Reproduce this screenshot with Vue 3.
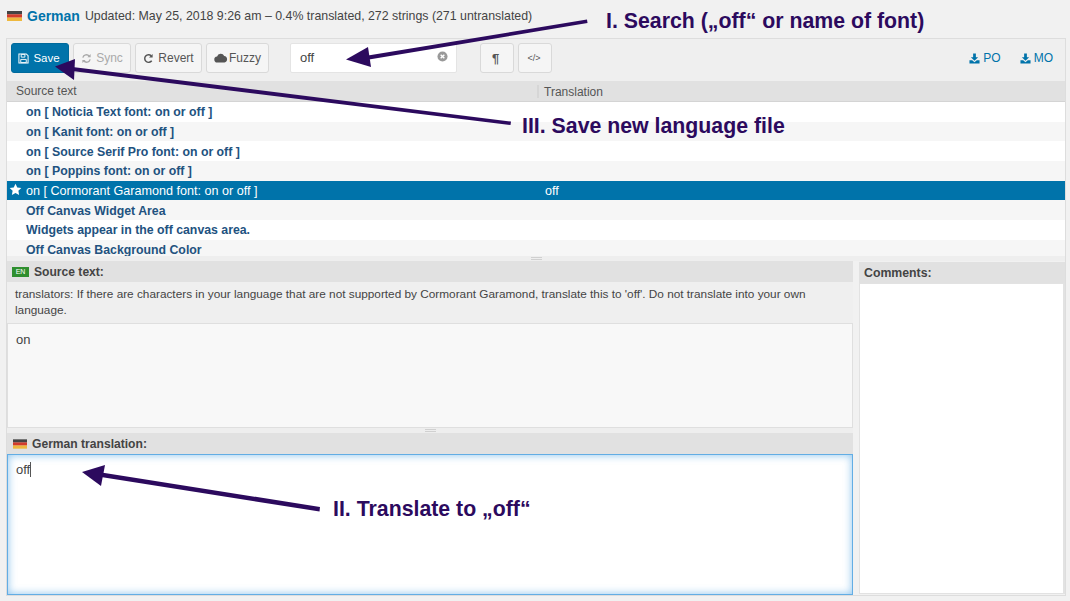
<script setup>
const rows = [
  { text: 'on [ Noticia Text font: on or off ]' },
  { text: 'on [ Kanit font: on or off ]' },
  { text: 'on [ Source Serif Pro font: on or off ]' },
  { text: 'on [ Poppins font: on or off ]' },
  { text: 'on [ Cormorant Garamond font: on or off ]', trans: 'off', selected: true },
  { text: 'Off Canvas Widget Area' },
  { text: 'Widgets appear in the off canvas area.' },
  { text: 'Off Canvas Background Color' }
]
</script>

<template>
  <div class="page">
    <header class="head">
      <svg class="flag" viewBox="0 0 15 10"><rect width="15" height="3.4" fill="#444"/><rect y="3.3" width="15" height="3.4" fill="#d23c2c"/><rect y="6.6" width="15" height="3.4" fill="#eeb83e"/></svg>
      <span class="lang">German</span>
      <span class="meta">Updated: May 25, 2018 9:26 am – 0.4% translated, 272 strings (271 untranslated)</span>
    </header>

    <div class="frame">
      <div class="toolbar">
        <button class="btn save">
          <svg class="ic" viewBox="0 0 12 12"><path d="M1 1h8l2 2v8H1z" fill="none" stroke="currentColor" stroke-width="1.100"/><path d="M3.500 1.500h4v3h-4zM3 7h6v3.500H3z" fill="none" stroke="currentColor" stroke-width="1"/></svg>
          Save
        </button>
        <button class="btn off">
          <svg class="ic" viewBox="0 0 12 12"><path d="M2 5a4 4 0 0 1 7-1.500M10 7a4 4 0 0 1-7 1.500" fill="none" stroke="currentColor" stroke-width="1.500"/><path d="M10.500 1v3.500H7zM1.500 11V7.500H5z" fill="currentColor"/></svg>
          Sync
        </button>
        <button class="btn revert">
          <svg class="ic" viewBox="0 0 12 12"><path d="M9.500 8.500A4.200 4.200 0 1 1 9 3" fill="none" stroke="currentColor" stroke-width="1.600"/><path d="M10.500 1v4H6.500z" fill="currentColor"/></svg>
          Revert
        </button>
        <button class="btn tight">
          <svg class="ic cloud" viewBox="0 0 14 10"><path d="M3.500 9.500a3 3 0 0 1-.4-6A3.800 3.800 0 0 1 10.200 3a3.300 3.300 0 0 1 .3 6.500z" fill="currentColor"/></svg>
          Fuzzy
        </button>
        <div class="search">
          <span>off</span>
          <svg class="clear" viewBox="0 0 12 12"><circle cx="6" cy="6" r="5.500" fill="#999"/><path d="M4 4l4 4M8 4l-4 4" stroke="#fff" stroke-width="1.500"/></svg>
        </div>
        <button class="btn square para">¶</button>
        <button class="btn square code">&lt;/&gt;</button>
        <div class="links">
          <a class="dl">
            <svg class="ic" viewBox="0 0 12 12"><path d="M4.500 .5h3v4h2.500L6 8.500 2 4.500h2.500z" fill="currentColor"/><path d="M.5 8h3l2.500 2 2.500-2h3v3.500H.5z" fill="currentColor"/></svg>
            PO
          </a>
          <a class="dl">
            <svg class="ic" viewBox="0 0 12 12"><path d="M4.500 .5h3v4h2.500L6 8.500 2 4.500h2.500z" fill="currentColor"/><path d="M.5 8h3l2.500 2 2.500-2h3v3.500H.5z" fill="currentColor"/></svg>
            MO
          </a>
        </div>
      </div>

      <div class="thead">
        <div class="c1">Source text</div>
        <div class="c2">Translation</div>
      </div>
      <div class="list">
        <div v-for="(r, i) in rows" :key="i" class="row" :class="{ alt: i % 2 === 1, sel: r.selected }">
          <div class="c1">
            <svg v-if="r.selected" class="star" viewBox="0 0 14 14"><path d="M7 .8l1.900 4 4.400.6-3.200 3 .8 4.400L7 10.700l-3.900 2.100.8-4.400-3.200-3 4.400-.6z" fill="#fff"/></svg>
            {{ r.text }}
          </div>
          <div class="c2">{{ r.trans }}</div>
        </div>
      </div>
      <div class="split"><i class="grip"></i></div>

      <div class="bottom">
        <div class="left">
          <div class="phead">
            <span class="en">EN</span>
            Source text:
          </div>
          <p class="desc">translators: If there are characters in your language that are not supported by Cormorant Garamond, translate this to 'off'. Do not translate into your own language.</p>
          <div class="source">on</div>
          <div class="split"><i class="grip"></i></div>
          <div class="phead">
            <svg class="flag small" viewBox="0 0 15 10"><rect width="15" height="3.400" fill="#444"/><rect y="3.300" width="15" height="3.400" fill="#d23c2c"/><rect y="6.600" width="15" height="3.400" fill="#eeb83e"/></svg>
            German translation:
          </div>
          <div class="target"><span class="typed">off</span></div>
        </div>
        <div class="right">
          <div class="phead">Comments:</div>
          <div class="comments"></div>
        </div>
      </div>
    </div>

    <svg class="arrows" viewBox="0 0 1070 601">
      <g fill="#2c0a5e" stroke="none">
        <path d="M587 19.500l.5 3.500L366 60l-1-4z"/>
        <path d="M346 59.500L368 47l3 20z"/>
        <path d="M511 121.500l-.5 3.500L72 71l.5-4z"/>
        <path d="M55 66.500L75 59l-1 21z"/>
        <path d="M320 507l-.5 4.500L101 477l.5-4.500z"/>
        <path d="M82 472l23-7-4 21z"/>
      </g>
    </svg>
    <div class="note n1">I. Search („off“ or name of font)</div>
    <div class="note n2">II. Translate to „off“</div>
    <div class="note n3">III. Save new language file</div>
  </div>
</template>

<style scoped>
.page {
  position: relative;
  width: 1070px;
  height: 601px;
  overflow: hidden;
  background: #f1f1f1;
  color: #444;
  font: 12px/16px "Liberation Sans", Arial, sans-serif;
}
.head {
  height: 32px;
  padding-left: 7px;
  display: flex;
  align-items: center;
  box-sizing: border-box;
}
.flag { width: 15px; height: 10px; flex: none; margin-right: 5px; }
.flag.small { margin-right: 5px; margin-left: 6px; width: 14px; }
.lang { color: #0073aa; font-size: 14px; font-weight: 700; margin-right: 5px; }
.meta { font-size: 12.360px; color: #444; }
.frame {
  margin: 6px 4px 0 6px;
  height: 558px;
  border: 1px solid #ddd;
  box-sizing: border-box;
  display: flex;
  flex-direction: column;
}
.toolbar {
  height: 42px;
  padding: 4px 4px 0 4px;
  box-sizing: border-box;
  display: flex;
  align-items: flex-start;
  gap: 4px;
  background: #efefef;
  flex: none;
}
.btn {
  height: 30px;
  width: 58px;
  padding: 0;
  border: 1px solid #d9d9d9;
  border-radius: 3px;
  background: #f5f5f5;
  color: #555;
  font: 12px "Liberation Sans", Arial, sans-serif;
  display: flex;
  align-items: center;
  justify-content: center;
  gap: 4px;
}
.btn.save { background: #0073aa; border-color: #006a9c; color: #fff; font-size: 11.500px; padding-right: 2px; }
.btn.off { color: #aaa; }
.btn.revert { width: 67px; }
.btn.tight { width: 63px; gap: 1px; }
.btn.square { width: 34px; }
.para { font-size: 13px; font-weight: 700; padding-right: 3px; }
.code { font-size: 9px; padding-right: 2px; }
.ic { width: 11px; height: 11px; flex: none; }
.cloud { width: 14px; height: 10px; }
.search {
  width: 167px;
  height: 30px;
  margin: 0 19px 0 17px;
  padding: 0 8px 0 9px;
  box-sizing: border-box;
  background: #fff;
  border: 1px solid #e4e4e4;
  border-radius: 2px;
  display: flex;
  align-items: center;
  justify-content: space-between;
  color: #444;
  font-size: 13px;
}
.clear { width: 11px; height: 11px; margin-top: -3px; }
.links { margin-left: auto; display: flex; gap: 19px; padding: 7px 8px 0 0; }
.dl { display: flex; align-items: center; gap: 3px; color: #0073aa; font-size: 12px; }
.thead {
  height: 21px;
  flex: none;
  display: flex;
  align-items: center;
  padding-top: 1px;
  background: #e1e1e1;
  border-bottom: 1px solid #d4d4d4;
  box-sizing: border-box;
  color: #555;
}
.c1 { width: 530px; box-sizing: border-box; padding-left: 19px; position: relative; }
.c2 { padding-left: 7px; flex: 1; }
.thead .c1 { padding-left: 9px; border-right: 2px solid #d6d6d6; height: 13px; line-height: 13px; width: 532px; }
.thead .c2 { padding-left: 5px; }
.list { height: 154px; overflow: hidden; flex: none; background: #fff; }
.row {
  height: 19.700px;
  padding-top: 1px;
  box-sizing: border-box;
  display: flex;
  align-items: center;
  font-weight: 700;
  font-size: 12.300px;
  color: #22527f;
  background: #fff;
}
.row.alt { background: #f6f6f6; }
.row.sel { background: #0073aa; color: #fff; font-weight: 400; font-size: 12.600px; }
.row.sel .c2 { padding-left: 8px; }
.star { position: absolute; left: 2px; top: 0; width: 13px; height: 13px; }
.split {
  height: 5px;
  flex: none;
  display: flex;
  justify-content: center;
  align-items: center;
  background: #eee;
}
.grip { width: 11px; height: 3px; background: repeating-linear-gradient(#d0d0d0 0 1px, transparent 1px 2px); }
.bottom { flex: 1; min-height: 0; display: flex; gap: 6px; }
.left { width: 846px; display: flex; flex-direction: column; }
.right { width: 206px; display: flex; flex-direction: column; padding: 1px 0 1px; box-sizing: border-box; }
.phead {
  height: 21px;
  padding-top: 1px;
  box-sizing: border-box;
  flex: none;
  display: flex;
  align-items: center;
  background: #e1e1e1;
  color: #444;
  font-weight: 700;
  font-size: 12.100px;
}
.right .phead { padding: 0 0 0 5px; height: 21px; font-size: 12.300px; }
.en {
  width: 17px;
  height: 10px;
  margin: 0 5px;
  background: #2f8f2f;
  color: #fff;
  font-size: 7px;
  line-height: 10px;
  text-align: center;
  font-weight: 400;
}
.comments { flex: 1; background: #fff; border: 1px solid #e2e2e2; border-right-width: 2px; }
.desc {
  margin: 0;
  height: 41px;
  flex: none;
  padding: 4px 8px 0 8px;
  box-sizing: border-box;
  line-height: 16px;
  font-size: 11.800px;
  color: #444;
  background: #efefef;
}
.source {
  height: 105px;
  flex: none;
  box-sizing: border-box;
  padding: 8px;
  background: #f8f8f8;
  border: 1px solid #dfdfdf;
  color: #444;
  font-size: 13px;
}
.target {
  flex: 1;
  box-sizing: border-box;
  padding: 7px 8px;
  background: #fff;
  border: 1px solid #62ade4;
  box-shadow: inset 0 0 8px rgba(90, 170, 230, .7);
  color: #444;
  font-size: 13px;
}
.typed { border-right: 1px solid #555; }
.arrows { position: absolute; left: 0; top: 0; width: 1070px; height: 601px; pointer-events: none; }
.note {
  position: absolute;
  color: #2c0a5e;
  font-size: 21.300px;
  line-height: 24px;
  font-weight: 700;
  white-space: nowrap;
}
.n1 { left: 606px; top: 9px; }
.n2 { left: 333px; top: 497px; }
.n3 { left: 522px; top: 114px; }
</style>
